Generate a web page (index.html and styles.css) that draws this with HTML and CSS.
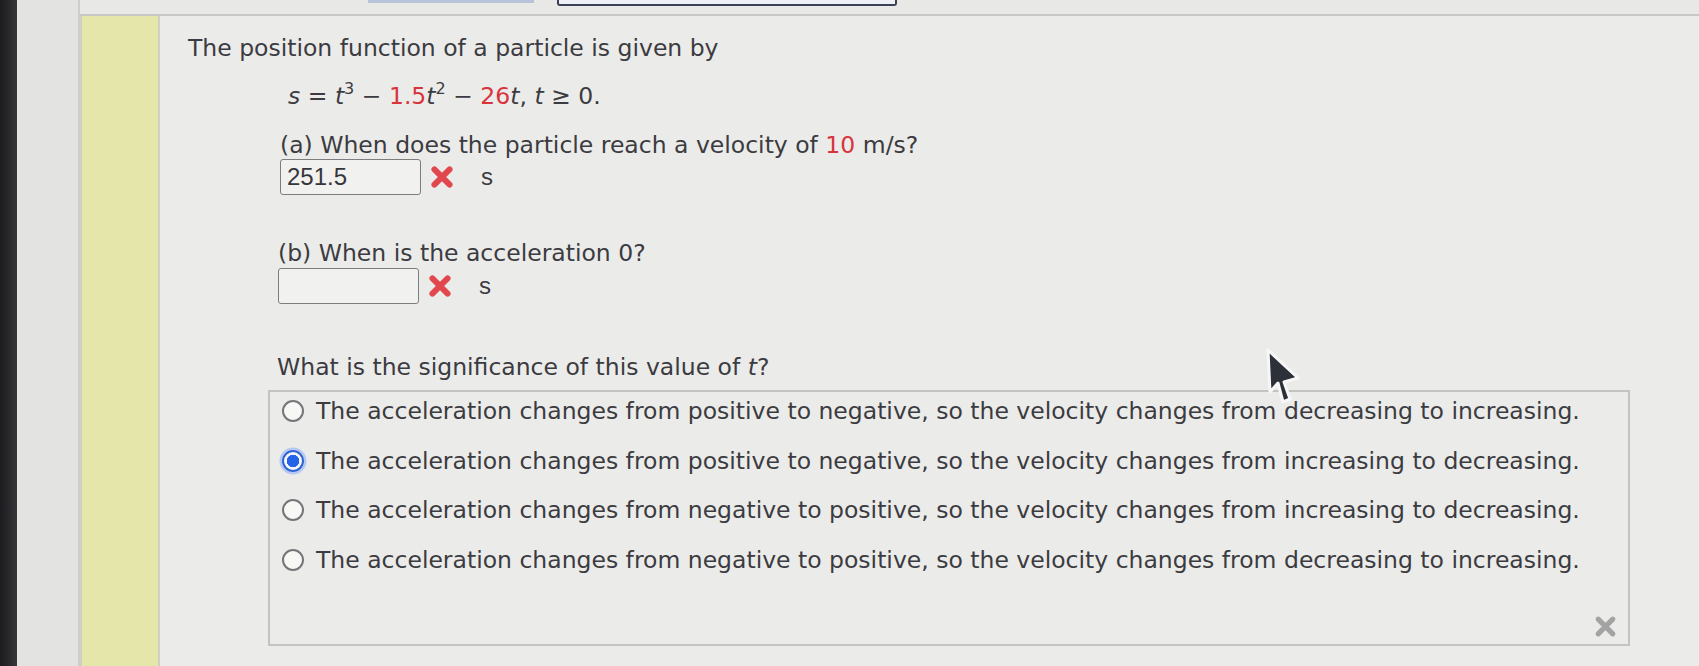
FILE: index.html
```html
<!DOCTYPE html>
<html>
<head>
<meta charset="utf-8">
<link rel="stylesheet" href="styles.css">
</head>
<body>
<div class="screen">
  <div class="bezel"></div>
  <div class="side"></div>
  <div class="page">
    <div class="topbar">
      <div class="tab-left"></div>
      <div class="tab-btn"></div>
    </div>
    <div class="row">
      <div class="yellow"></div>
      <div class="content">
        <p class="intro">The position function of a particle is given by</p>
        <p class="eq"><i>s</i> = <i>t</i><sup>3</sup> − <span class="red">1.5</span><i>t</i><sup>2</sup> − <span class="red">26</span><i>t</i>, <i>t</i> ≥ 0.</p>
        <div class="part parta">
          <p class="q">(a) When does the particle reach a velocity of <span class="red">10</span> m/s?</p>
          <div class="answer">
            <div class="box">251.5</div>
            <svg class="xmark" viewBox="0 0 24 24"><path d="M5 5 L19 19 M19 5 L5 19" stroke="#e0484d" stroke-width="5.5" stroke-linecap="round"/></svg>
            <span class="unit">s</span>
          </div>
        </div>
        <div class="part partb">
          <p class="q">(b) When is the acceleration 0?</p>
          <div class="answer">
            <div class="box"></div>
            <svg class="xmark" viewBox="0 0 24 24"><path d="M5 5 L19 19 M19 5 L5 19" stroke="#e0484d" stroke-width="5.5" stroke-linecap="round"/></svg>
            <span class="unit">s</span>
          </div>
        </div>
        <p class="q sig">What is the significance of this value of <i>t</i>?</p>
        <div class="choices">
          <div class="choice"><span class="radio"></span><span>The acceleration changes from positive to negative, so the velocity changes from decreasing to increasing.</span></div>
          <div class="choice"><span class="radio on"></span><span>The acceleration changes from positive to negative, so the velocity changes from increasing to decreasing.</span></div>
          <div class="choice"><span class="radio"></span><span>The acceleration changes from negative to positive, so the velocity changes from increasing to decreasing.</span></div>
          <div class="choice"><span class="radio"></span><span>The acceleration changes from negative to positive, so the velocity changes from decreasing to increasing.</span></div>
          <svg class="xgray" viewBox="0 0 24 24"><path d="M5 5 L19 19 M19 5 L5 19" stroke="#a3a3a3" stroke-width="5" stroke-linecap="round"/></svg>
        </div>
        <svg class="cursor" viewBox="0 0 40 60"><path d="M4 4 L6 46 L14 37 L19 56 L26 53 L20 36 L34 32 Z" fill="#2c3038" stroke="#f7f7f7" stroke-width="3" stroke-linejoin="round"/></svg>
      </div>
    </div>
  </div>
</div>
</body>
</html>
```
FILE: styles.css
```css
html, body {
  margin: 0;
  padding: 0;
  width: 1699px;
  height: 666px;
  overflow: hidden;
  background: #e6e6e4;
}
.screen {
  display: flex;
  width: 1699px;
  height: 666px;
  font-family: "DejaVu Sans", sans-serif;
  color: #3b3b41;
}
.bezel {
  width: 17px;
  background: linear-gradient(90deg, #1c1c1e, #35353a);
  flex: none;
}
.side {
  width: 61px;
  flex: none;
  background: #e3e3e1;
  border-right: 2px solid #cdcdc9;
}
.page {
  flex: 1;
  display: flex;
  flex-direction: column;
}
.topbar {
  height: 14px;
  flex: none;
  background: #e8e8e6;
  border-bottom: 2px solid #c8c8c5;
  position: relative;
}
.tab-left {
  position: absolute;
  left: 288px;
  top: 0;
  width: 166px;
  height: 3px;
  background: #b8c2d8;
}
.tab-btn {
  position: absolute;
  left: 477px;
  top: 0;
  width: 336px;
  height: 4px;
  border: 2px solid #3c3f58;
  border-top: none;
  border-radius: 0 0 3px 3px;
  background: #eef0f6;
}
.row {
  flex: 1;
  display: flex;
}
.yellow {
  width: 76px;
  flex: none;
  background: #e5e6a9;
  border-left: 2px solid #cfcfc3;
  border-right: 2px solid #cfcfc3;
}
.content {
  flex: 1;
  background: #ebebe9;
  padding: 8px 0 0 28px;
  position: relative;
  font-size: 23.5px;
}
p { margin: 0; }
.intro { line-height: 48px; }
.eq {
  margin-left: 100px;
  line-height: 48px;
}
.eq sup { font-size: 16px; vertical-align: 10px; line-height: 0; }
.red { color: #d8343c; }
.part { margin-left: 92px; }
.parta { margin-top: 8px; }
.q { line-height: 26px; padding-top: 4px; }
.answer {
  display: flex;
  align-items: center;
  height: 37px;
}
.box {
  width: 133px;
  height: 34px;
  border: 1.5px solid #7d7d80;
  border-radius: 3px;
  background: #f1f1ef;
  font-family: "Liberation Sans", sans-serif;
  font-size: 24px;
  line-height: 34px;
  padding-left: 6px;
  color: #36363a;
}
.xmark {
  width: 26px;
  height: 26px;
  margin-left: 8px;
}
.unit {
  margin-left: 26px;
  font-size: 24px;
  font-family: "Liberation Sans", sans-serif;
}
.partb { margin-top: 41px; margin-left: 90px; }
.partb .answer { margin-top: 1px; }
.sig { margin: 46px 0 0 89px; }
.choices {
  margin: 10px 0 0 80px;
  width: 1362px;
  height: 256px;
  border: 2px solid #c3c3c0;
  box-sizing: border-box;
  padding: 4px 0 0 12px;
  position: relative;
  display: flex;
  flex-direction: column;
  gap: 19.5px;
}
.choice {
  display: flex;
  align-items: center;
  height: 30px;
  gap: 12px;
  white-space: nowrap;
}
.radio {
  width: 18px;
  height: 18px;
  border: 2px solid #76767a;
  border-radius: 50%;
  background: #f7f7f5;
  flex: none;
}
.radio.on {
  border: 2px solid #2f63d8;
  background: radial-gradient(circle, #2563e8 0 6px, #f7f7f5 6.5px);
  box-shadow: 0 0 0 2.5px #b5c9f2;
}
.xgray {
  position: absolute;
  right: 10px;
  bottom: 5px;
  width: 25px;
  height: 25px;
}
.cursor {
  position: absolute;
  left: 1104px;
  top: 330px;
  width: 40px;
  height: 60px;
}
```
